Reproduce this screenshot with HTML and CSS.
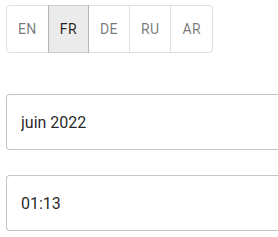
FILE: index.html
```html
<!DOCTYPE html>
<html lang="fr">
<head>
    <meta charset="utf-8">
    <link rel="stylesheet" href="styles.css">
    <title>Langue</title>
</head>
<body>
    <div class="langs">
        <button class="lang">EN</button>
        <button class="lang selected">FR</button>
        <button class="lang">DE</button>
        <button class="lang">RU</button>
        <button class="lang">AR</button>
    </div>
    <div class="fields">
        <div class="field first">
            <input class="field-input" type="text" value="juin 2022">
        </div>
        <div class="field">
            <input class="field-input" type="text" value="01:13">
        </div>
    </div>
</body>
</html>
```

FILE: styles.css
```css
body{
    margin: 0;
    padding: 5px 0 5px 6px;
    background: #fff;
    font-family: Roboto, "Liberation Sans", sans-serif;
    overflow: hidden;
}
.langs{
    display: inline-flex;
    border-radius: 4px;
}
.lang{
    font-family: inherit;
    font-size: 14px;
    font-weight: 400;
    line-height: 24px;
    letter-spacing: 0.4px;
    color: rgba(0, 0, 0, 0.54);
    background: transparent;
    border: 1px solid rgba(0, 0, 0, 0.12);
    padding: 11px;
    margin: 0;
    cursor: pointer;
}
.lang + .lang{
    border-left-color: transparent;
    margin-left: -1px;
}
.lang:first-child{
    border-radius: 4px 0 0 4px;
}
.lang:last-child{
    border-radius: 0 4px 4px 0;
}
.lang.selected{
    color: rgba(0, 0, 0, 0.87);
    background: rgba(0, 0, 0, 0.08);
    border-left-color: rgba(0, 0, 0, 0.12);
}
.lang.selected + .lang{
    border-left-color: rgba(0, 0, 0, 0.12);
}
.fields{
    overflow: hidden;
}
.field{
    width: 300px;
    margin-top: 25px;
}
.field.first{
    margin-top: 41px;
}
.field-input{
    box-sizing: border-box;
    width: 100%;
    height: 56px;
    padding: 16.5px 14px;
    border: 1px solid rgba(0, 0, 0, 0.23);
    border-radius: 4px;
    font-family: inherit;
    font-size: 16px;
    color: rgba(0, 0, 0, 0.87);
    outline: none;
    background: #fff;
}
```
